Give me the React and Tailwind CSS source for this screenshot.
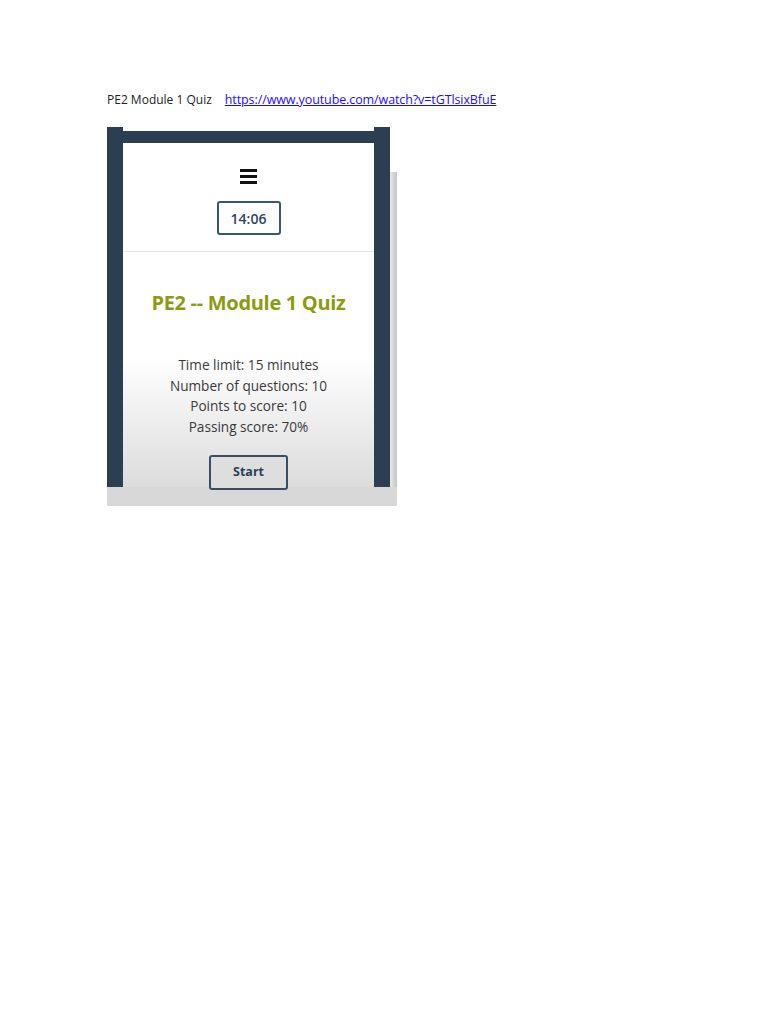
const rules = ['Time limit: 15 minutes', 'Number of questions: 10', 'Points to score: 10', 'Passing score: 70%'];

function Hamburger() {
  return (
    <div className="flex flex-col gap-[3px] w-[17px]">
      <div className="h-[3px] bg-[#111]" />
      <div className="h-[3px] bg-[#111]" />
      <div className="h-[3px] bg-[#111]" />
    </div>
  );
}

export default function App() {
  return (
    <div className="min-h-screen bg-white pt-[91px] pl-[107px]" style={{ fontFamily: '"Open Sans", sans-serif' }}>
      {/* doc line */}
      <div className="flex items-center text-[#222] h-[18px]" style={{ fontFamily: '"Open Sans", "Liberation Sans", sans-serif' }}>
        <span className="text-[12px]">PE2 Module 1 Quiz</span>
        <a href="#" className="ml-[13px] text-[12.5px] text-[#1a0dff] underline tracking-[-0.1px]">https://www.youtube.com/watch?v=tGTlsixBfuE</a>
      </div>

      {/* screenshot */}
      <div className="mt-[18px] w-[290px] h-[379px] flex flex-col bg-[#d8d8d8]">
        <div className="flex h-[360px] shrink-0 bg-white">
          <div className="w-[16px] bg-[#2c3e52]" />
          <div className="w-[251px] flex flex-col">
            <div className="h-[4px] shrink-0 bg-white" />
            <div className="h-[12px] shrink-0 bg-[#2c3e52]" />
            <div className="h-[344px] shrink-0 flex flex-col items-center bg-gradient-to-b from-white from-[62%] to-[#dcdcdc]">
              <div className="mt-[26px] shrink-0">
                <Hamburger />
              </div>
              <div className="mt-[17px] shrink-0 w-[64px] h-[34px] rounded-[3px] border-2 border-[#3b5578] flex items-center justify-center text-[14px] font-semibold text-[#2e4566]">
                14:06
              </div>
              <div className="mt-[16px] shrink-0 self-stretch h-px bg-[#e4e4e4]" />
              <h1 className="mt-[38px] shrink-0 text-[20px] font-bold text-[#8b9a12] tracking-[-0.3px] leading-[26px]">PE2 -- Module 1 Quiz</h1>
              <div className="mt-[39px] shrink-0 flex flex-col items-center text-[13.6px] text-[#3a3a3a] leading-[20.7px]">
                {rules.map((r) => (
                  <p key={r}>{r}</p>
                ))}
              </div>
              <button className="mt-[17px] shrink-0 w-[79px] h-[35px] rounded-[3px] border-2 border-[#3b4d66] bg-[#dedede] text-[12.5px] font-bold text-[#2e3f58]">
                Start
              </button>
            </div>
          </div>
          <div className="w-[16px] bg-[#2c3e52]" />
          <div className="w-[7px] flex flex-col">
            <div className="h-[45px] bg-white" />
            <div className="flex-1 bg-gradient-to-r from-[#e8e8e8] to-[#c4c4c4]" />
          </div>
        </div>
      </div>
    </div>
  );
}
